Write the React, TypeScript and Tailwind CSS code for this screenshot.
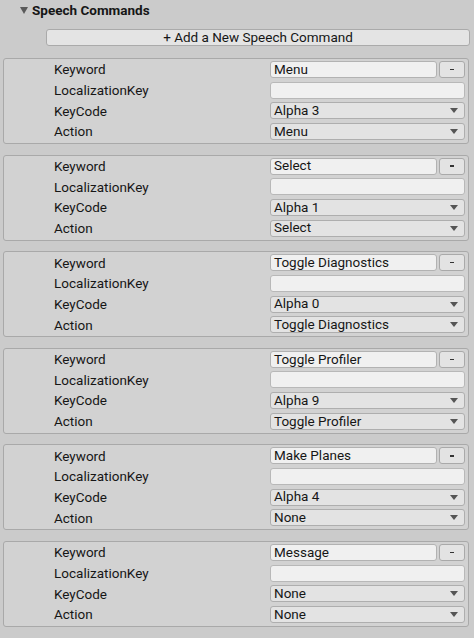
import React from "react";

type Cmd = { keyword: string; keycode: string; action: string };

const cmds: Cmd[] = [
  { keyword: "Menu", keycode: "Alpha 3", action: "Menu" },
  { keyword: "Select", keycode: "Alpha 1", action: "Select" },
  { keyword: "Toggle Diagnostics", keycode: "Alpha 0", action: "Toggle Diagnostics" },
  { keyword: "Toggle Profiler", keycode: "Alpha 9", action: "Toggle Profiler" },
  { keyword: "Make Planes", keycode: "Alpha 4", action: "None" },
  { keyword: "Message", keycode: "None", action: "None" },
];

function Arrow() {
  return (
    <svg width="8" height="5" viewBox="0 0 8 5" className="shrink-0">
      <path d="M0 0 L8 0 L4 5 Z" fill="#555555" />
    </svg>
  );
}

function Dropdown({ value }: { value: string }) {
  return (
    <div className="h-[17px] flex items-center justify-between pl-[3px] pr-[6px] bg-[#e3e3e3] border border-[#aeaeae] rounded-[3px] text-[13.5px] leading-none text-[#161616]">
      <span>{value}</span>
      <Arrow />
    </div>
  );
}

function Group({ c }: { c: Cmd }) {
  return (
    <div className="h-[86px] border border-[#a9a9a9] rounded-[3px] bg-[#d2d2d2] pt-[2px] flex">
      <div className="w-[50px] shrink-0" />
      <div className="w-[216px] shrink-0 flex flex-col gap-[3.67px] text-[13.5px] text-[#161616]">
        <div className="h-[17px] flex items-center">Keyword</div>
        <div className="h-[17px] flex items-center">LocalizationKey</div>
        <div className="h-[17px] flex items-center">KeyCode</div>
        <div className="h-[17px] flex items-center">Action</div>
      </div>
      <div className="flex-1 mr-[3px] flex flex-col gap-[3.67px]">
        <div className="h-[17px] flex gap-[2px]">
          <div className="flex-1 h-[17px] flex items-center pl-[3px] bg-[#f0f0f0] border border-[#b2b2b2] rounded-[3px] text-[13.5px] leading-none text-[#161616]">
            {c.keyword}
          </div>
          <div className="w-[26px] h-[17px] flex items-center justify-center bg-[#e3e3e3] border border-[#a9a9a9] rounded-[3px]">
            <div className="w-[4px] h-[1.5px] bg-[#333]" />
          </div>
        </div>
        <div className="h-[17px] bg-[#f0f0f0] border border-[#b8b8b8] rounded-[3px]" />
        <Dropdown value={c.keycode} />
        <Dropdown value={c.action} />
      </div>
    </div>
  );
}

export default function App() {
  return (
    <div
      className="w-[474px] h-[638px] bg-[#cbcbcb] overflow-hidden"
      style={{ fontFamily: "Roboto, 'Liberation Sans', sans-serif" }}
    >
      <div className="h-[20px] flex items-center pl-[20px] gap-[4px]">
        <svg width="8" height="7" viewBox="0 0 8 7">
          <path d="M0 0 L8 0 L4 7 Z" fill="#5a5a5a" />
        </svg>
        <span className="text-[13.5px] font-bold text-[#161616]">Speech Commands</span>
      </div>
      <div className="mt-[9px] ml-[46px] mr-[4px] h-[17px] flex items-center justify-center bg-[#e4e4e4] border border-[#aaaaaa] rounded-[3px] text-[13.5px] leading-none text-[#161616]">
        + Add a New Speech Command
      </div>
      <div className="mt-[12px] ml-[3px] mr-[5px] flex flex-col gap-[10.6px]">
        {cmds.map((c, i) => (
          <Group key={i} c={c} />
        ))}
      </div>
    </div>
  );
}
